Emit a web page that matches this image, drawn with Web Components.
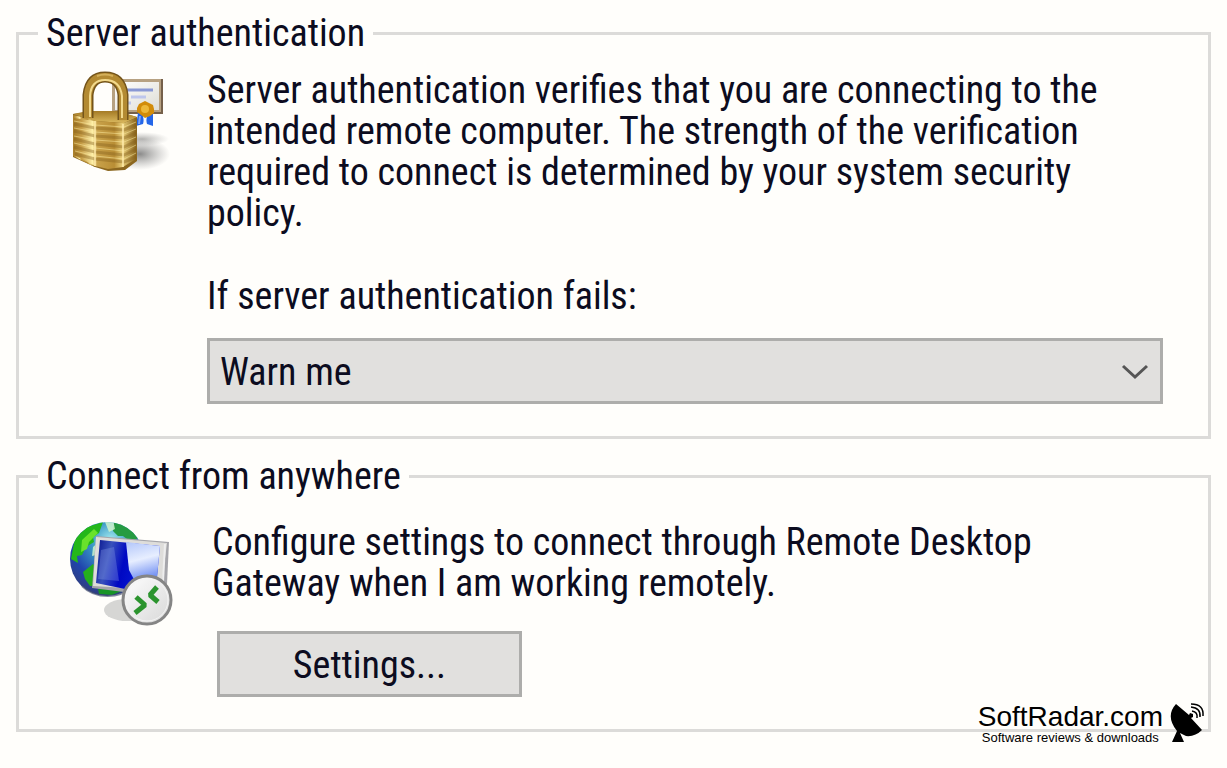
<!DOCTYPE html>
<html lang="en">
<head>
<meta charset="utf-8">
<title>Remote Desktop Connection - Advanced</title>
<style>
  body{
    margin:0;
    background:#fffefb;
    color:#0c0c20;
    font-family:"Roboto Condensed", Roboto, sans-serif;
    font-size:38px;
    line-height:41px;
  }
</style>
</head>
<body>
<advanced-page></advanced-page>

<template id="groupBox">
  <style>
  :host{
    display:block;
  }
  fieldset{
    margin:0;
    min-width:0;
    padding:0 45px 32px 51px;
    border:3px solid #dcdbd9;
  }
  legend{
    margin-left:-32px;
    padding:0 8px;
  }
  .row{
    display:flex;
    align-items:flex-start;
    gap:33px;
    padding-top:var(--group-top, 16px);
  }
  .body{
    flex:1;
    min-width:0;
  }
  </style>
  <fieldset>
    <legend></legend>
    <div class="row">
      <slot name="icon"></slot>
      <div class="body"><slot></slot></div>
    </div>
  </fieldset>
</template>

<template id="comboField">
  <style>
  :host{
    display:block;
  }
  label{
    display:block;
    margin-bottom:21px;
  }
  .box{
    display:grid;
    align-items:center;
  }
  select, svg{
    grid-area:1 / 1;
  }
  select{
    appearance:none;
    width:100%;
    height:66px;
    margin:0;
    padding:2px 48px 0 10px;
    border:3px solid #adadab;
    border-radius:0;
    background:#e1e0de;
    color:inherit;
    font:inherit;
  }
  svg{
    justify-self:end;
    margin-right:14px;
    pointer-events:none;
  }
  </style>
  <label for="choice"></label>
  <div class="box">
    <select id="choice"></select>
    <svg width="28" height="18" viewBox="0 0 28 18">
      <path d="M2 4L14 15L26 4" fill="none" stroke="#555" stroke-width="3"/>
    </svg>
  </div>
</template>

<template id="pushButton">
  <style>
  :host{
    display:block;
  }
  button{
    width:305px;
    height:66px;
    padding:2px 0 0;
    border:3px solid #adadab;
    background:#e1e0de;
    color:inherit;
    font:inherit;
  }
  </style>
  <button type="button"><slot></slot></button>
</template>

<template id="lockIcon">
  <style>
  :host{
    display:block;
    flex:none;
  }
  svg{
    display:block;
  }
  </style>
  <svg width="104" height="104" viewBox="0 0 104 104" aria-hidden="true">
    <defs>
      <linearGradient id="brass">
        <stop offset="0" stop-color="#a67c27"/>
        <stop offset=".12" stop-color="#c59c46"/>
        <stop offset=".3" stop-color="#fff0a8"/>
        <stop offset=".38" stop-color="#c8a14a"/>
        <stop offset=".65" stop-color="#b98e35"/>
        <stop offset=".78" stop-color="#e9cf7b"/>
        <stop offset="1" stop-color="#8a651c"/>
      </linearGradient>
      <linearGradient id="top" x2="0" y2="1">
        <stop offset="0" stop-color="#a57b25"/>
        <stop offset="1" stop-color="#dab95f"/>
      </linearGradient>
      <radialGradient id="shade">
        <stop offset="0" stop-color="#777" stop-opacity=".85"/>
        <stop offset="1" stop-color="#999" stop-opacity="0"/>
      </radialGradient>
      <linearGradient id="paper" x2="1" y2="1">
        <stop offset="0" stop-color="#fff"/>
        <stop offset="1" stop-color="#deddd5"/>
      </linearGradient>
    </defs>
    <ellipse cx="70" cy="84" rx="30" ry="16" fill="url(#shade)"/>
    <ellipse cx="72" cy="69" rx="27" ry="7" fill="url(#shade)" opacity=".65"/>
    <path d="M42 9H93V44H42z" fill="#75604a"/>
    <path d="M42 9H91V42H42z" fill="#b7a181"/>
    <path d="M45 12H89V40H45z" fill="url(#paper)"/>
    <path d="M57 20H83" stroke="#8998d4" stroke-width="3"/>
    <path d="M61 27H76M56 33H61" stroke="#bdc6ec" stroke-width="3"/>
    <path d="M68 43L66 56L73 54L75 46L77 54L83 56L83 42z" fill="#2466e8"/>
    <path d="M73 46H77L76 53H74z" fill="#f4f7ff"/>
    <path d="M70 46L69 54" stroke="#7aa4f6" stroke-width="2"/>
    <path d="M75 31l4 2 4 2 1 4 0 4-4 3-5 2-4-3-4-3 0-4 2-4z" fill="#d28c0a"/>
    <circle cx="75" cy="39" r="4" fill="#edb839"/>
    <path d="M3 44L18 42H48L67 47V91L55 100L38 101L25 97L3 87z" fill="#8c671f"/>
    <path d="M3 45L25 50V97L3 86z" fill="url(#brass)"/>
    <path d="M3 44L18 41H48L67 47L54 53L25 51z" fill="url(#top)"/>
    <path d="M4 48L25 51L54 53L66 48V89L53 97L38 99L25 96L4 85z" fill="url(#brass)"/>
    <path d="M4 54L25 58L54 60L66 55M4 61L25 66L54 68L66 63M4 69L25 74L54 77L66 71M4 77L25 82L54 85L66 79M5 84L25 89L54 92L66 87" fill="none" stroke="#85601b" stroke-width="3" opacity=".4"/>
    <path d="M4 51L25 55L54 57L66 52M4 58L25 62L54 64L66 59M4 66L25 70L54 72L66 67M4 73L25 78L54 81L66 75M5 81L25 86L54 89L66 83" fill="none" stroke="#fff0a5" stroke-width="1" opacity=".5"/>
    <path d="M25 51V96M53 54V97" stroke="#ffebaa" stroke-width="2" opacity=".75"/>
    <path d="M18 48V25Q20 7 35 7Q51 7 53 25V50" fill="none" stroke="#74541a" stroke-width="11"/>
    <path d="M18 48V25Q20 7 35 7Q51 7 53 25V50" fill="none" stroke="#b38a32" stroke-width="8"/>
    <path d="M20 47V26Q21 10 35 10Q50 10 52 26V48" fill="none" stroke="#f2d98c" stroke-width="2"/>
    <path d="M27 6Q35 3 43 6" fill="none" stroke="#d4b05b" stroke-width="2"/>
  </svg>
</template>

<template id="remoteIcon">
  <style>
  :host{
    display:block;
    flex:none;
  }
  svg{
    display:block;
  }
  </style>
  <svg width="104" height="104" viewBox="0 2 104 104" aria-hidden="true">
    <defs>
      <radialGradient id="sea" cx=".55" cy=".25" r=".75">
        <stop offset="0" stop-color="#a8eff2"/>
        <stop offset=".35" stop-color="#3997c5"/>
        <stop offset=".72" stop-color="#2044ad"/>
        <stop offset="1" stop-color="#303e80"/>
      </radialGradient>
      <linearGradient id="screen" x2="1" y2=".2">
        <stop offset="0" stop-color="#06128d"/>
        <stop offset=".25" stop-color="#3851bb"/>
        <stop offset=".5" stop-color="#0008c3"/>
        <stop offset="1" stop-color="#0824dd"/>
      </linearGradient>
      <linearGradient id="glare" x2=".2" y2="1">
        <stop offset="0" stop-color="#b2c6fa"/>
        <stop offset=".45" stop-color="#e7eeff"/>
        <stop offset="1" stop-color="#5579ef"/>
      </linearGradient>
      <linearGradient id="disc" x2="1" y2="1">
        <stop offset="0" stop-color="#fff"/>
        <stop offset="1" stop-color="#d7d7d7"/>
      </linearGradient>
      <clipPath id="world"><circle cx="37" cy="39" r="37"/></clipPath>
    </defs>
    <ellipse cx="57" cy="90" rx="23" ry="11" fill="#d6d6d4"/>
    <circle cx="37" cy="39" r="37" fill="url(#sea)"/>
    <g clip-path="url(#world)">
      <path d="M5 18L17 7L33 2L29 13L23 17L24 22L16 27L12 35L7 36L8 43L1 39z" fill="#24b71a"/>
      <path d="M12 20L24 9L28 13L19 22L17 29L11 32z" fill="#69e22b"/>
      <path d="M44 3L51 2L62 10L68 18L61 22L53 16L48 16L43 11z" fill="#269b42"/>
      <path d="M13 52L23 44L30 52L28 66L20 66L15 59z" fill="#25af1e"/>
      <path d="M28 69L45 67L54 70L42 75L29 74z" fill="#189427"/>
      <path d="M35 2L43 0L45 9L39 12zM23 27L30 21V34L22 36z" fill="#d7f8cd" opacity=".8"/>
    </g>
    <path d="M12 66Q22 76 38 76Q52 76 60 68" fill="none" stroke="#455070" stroke-width="2" opacity=".65"/>
    <path d="M26 16L99 22L97 64L92 72L62 73L22 68z" fill="#a5a5aa"/>
    <path d="M26 17L97 23L91 70L23 66z" fill="#deddda"/>
    <path d="M30 20L90 26L86 67L67 67L60 70L26 63z" fill="url(#screen)"/>
    <path d="M56 22L90 26L86 67L68 67L59 50z" fill="url(#glare)"/>
    <path d="M31 30L44 27L49 61L28 59z" fill="#93a5ef" opacity=".3"/>
    <path d="M95 24L93 62" stroke="#eee" stroke-width="2"/>
    <circle cx="77" cy="80" r="24" fill="url(#disc)" stroke="#858585" stroke-width="3"/>
    <circle cx="77" cy="80" r="21" fill="none" stroke="#f4f4f4" stroke-width="1"/>
    <path d="M66 77L75 85L65 93M87 67L80 75L88 82" fill="none" stroke="#2b942e" stroke-width="5" stroke-linejoin="bevel"/>
  </svg>
</template>

<template id="brandMark">
  <style>
  :host{
    display:flex;
    gap:7px;
    color:#000;
    font-family:"Liberation Sans", Arial, sans-serif;
  }
  .name{
    font-size:28px;
    line-height:28px;
  }
  .tagline{
    font-size:13px;
    line-height:14px;
    padding-left:4px;
  }
  svg{
    display:block;
  }
  </style>
  <div>
    <div class="name">SoftRadar.com</div>
    <div class="tagline">Software reviews &amp; downloads</div>
  </div>
  <svg width="36" height="42" viewBox="0 0 36 42" aria-hidden="true">
    <path d="M6 1L19 12L20 10L23 11L23 14L21 15L32 27Q25 34 16 33L10 30L14 39H2L7 28Q-5 13 6 1z" fill="#000"/>
    <path d="M22 8Q28 9 27 15M21 4Q31 5 30 14M21 1Q34 1 33 13" fill="none" stroke="#000" stroke-width="1.5"/>
  </svg>
</template>

<template id="advancedPage">
  <style>
  :host{
    display:block;
    position:relative;
    padding:13px 16px 35px;
  }
  main{
    display:flex;
    flex-direction:column;
    gap:17px;
  }
  p{
    margin:0;
    padding-right:24px;
  }
  combo-field{
    margin-top:42px;
  }
  .anywhere{
    --group-top:25px;
  }
  .anywhere p{
    padding-left:5px;
  }
  push-button{
    margin:27px 0 0 10px;
  }
  /* sits over the lower border of the last group */
  brand-mark{
    position:absolute;
    right:21px;
    bottom:22px;
  }
  </style>
  <main>
    <group-box label="Server authentication">
      <lock-icon slot="icon"></lock-icon>
      <p>Server authentication verifies that you are connecting to the intended remote computer. The strength of the verification required to connect is determined by your system security policy.</p>
      <combo-field label="If server authentication fails:" options="Warn me|Connect and don't warn me|Do not connect"></combo-field>
    </group-box>
    <group-box class="anywhere" label="Connect from anywhere">
      <remote-icon slot="icon"></remote-icon>
      <p>Configure settings to connect through Remote Desktop Gateway when I am working remotely.</p>
      <push-button>Settings...</push-button>
    </group-box>
  </main>
  <brand-mark></brand-mark>
</template>

<script>
// clones the template with the given id into an open shadow root
class TemplateElement extends HTMLElement {
  constructor(id) {
    super();
    this.attachShadow({mode:'open'});
    this.shadowRoot.appendChild(document.getElementById(id).content.cloneNode(true));
  }
}

class GroupBox extends TemplateElement {
  constructor() {
    super('groupBox');
  }

  connectedCallback() {
    this.shadowRoot.querySelector('legend').textContent = this.getAttribute('label');
  }
}

class ComboField extends TemplateElement {
  constructor() {
    super('comboField');
  }

  connectedCallback() {
    this.shadowRoot.querySelector('label').textContent = this.getAttribute('label');
    let select = this.shadowRoot.querySelector('select');
    select.replaceChildren();
    for(let name of this.getAttribute('options').split('|')){
      select.add(new Option(name));
    }
  }
}

class PushButton extends TemplateElement {
  constructor() {
    super('pushButton');
  }
}

class LockIcon extends TemplateElement {
  constructor() {
    super('lockIcon');
  }
}

class RemoteIcon extends TemplateElement {
  constructor() {
    super('remoteIcon');
  }
}

class BrandMark extends TemplateElement {
  constructor() {
    super('brandMark');
  }
}

class AdvancedPage extends TemplateElement {
  constructor() {
    super('advancedPage');
  }
}

window.customElements.define('group-box', GroupBox);
window.customElements.define('combo-field', ComboField);
window.customElements.define('push-button', PushButton);
window.customElements.define('lock-icon', LockIcon);
window.customElements.define('remote-icon', RemoteIcon);
window.customElements.define('brand-mark', BrandMark);
window.customElements.define('advanced-page', AdvancedPage);
</script>
</body>
</html>
